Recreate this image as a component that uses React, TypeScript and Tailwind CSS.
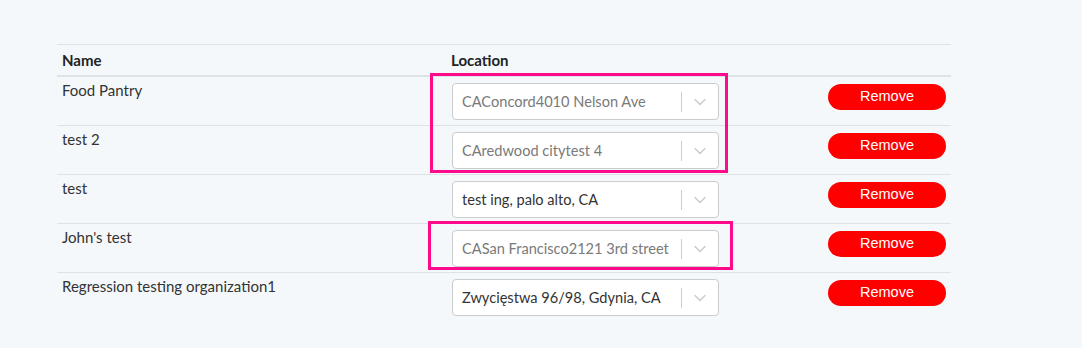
import { ChevronDown } from "lucide-react";

type Row = { name: string; location: string; muted: boolean };

const rows: Row[] = [
  { name: "Food Pantry", location: "CAConcord4010 Nelson Ave", muted: true },
  { name: "test 2", location: "CAredwood citytest 4", muted: true },
  { name: "test", location: "test ing, palo alto, CA", muted: false },
  { name: "John's test", location: "CASan Francisco2121 3rd street", muted: true },
  { name: "Regression testing organization1", location: "Zwycięstwa 96/98, Gdynia, CA", muted: false },
];

function LocationSelect({ value, muted }: { value: string; muted: boolean }) {
  return (
    <div className="flex h-[37px] w-[267px] items-center rounded-[4px] border border-[#cccccc] bg-white">
      <span
        className={`flex-1 truncate pl-[9px] text-[14.6px] ${muted ? "text-[#7a7a7a]" : "text-[#333333]"}`}
      >
        {value}
      </span>
      <span className="h-[20px] w-px bg-[#cccccc]" />
      <span className="flex w-[36px] items-center justify-center text-[#cccccc]">
        <ChevronDown size={20} strokeWidth={1.75} />
      </span>
    </div>
  );
}

export default function App() {
  return (
    <div
      className="min-h-[348px] w-full bg-[#f4f8fb] pt-[44px] text-[#333333]"
      style={{ fontFamily: "Lato, 'Noto Sans', sans-serif" }}
    >
      <div className="relative ml-[57px] w-[894px]">
        <div className="grid h-[33px] grid-cols-[389px_1fr_auto] border-t border-b-2 border-[#dde2e6] text-[15px] font-bold text-[#222222]">
          <div className="flex items-center pl-[5px]">Name</div>
          <div className="flex items-center pl-[5px]">Location</div>
          <div />
        </div>

        {rows.map((r, i) => (
          <div
            key={r.name}
            className={`grid h-[49px] grid-cols-[389px_1fr_auto] ${i < rows.length - 1 ? "border-b border-[#dde2e6]" : ""}`}
          >
            <div className="pl-[5px] pt-[3px] text-[15px] leading-5">{r.name}</div>
            <div className="pl-[6px] pt-[6px]">
              <LocationSelect value={r.location} muted={r.muted} />
            </div>
            <div className="pr-[5px] pt-[6px]">
              <button
                className="h-[26px] w-[118px] rounded-full bg-[#ff0000] text-[14.5px] text-white"
                style={{ fontFamily: "'Liberation Sans', Arial, sans-serif" }}
              >
                Remove
              </button>
            </div>
          </div>
        ))}

        {/* annotation boxes */}
        <div className="pointer-events-none absolute left-[373px] top-[29px] h-[100px] w-[298px] border-[3px] border-[#ff0a8c]" />
        <div className="pointer-events-none absolute left-[371px] top-[177px] h-[49px] w-[305px] border-[3px] border-[#ff0a8c]" />
      </div>
    </div>
  );
}
